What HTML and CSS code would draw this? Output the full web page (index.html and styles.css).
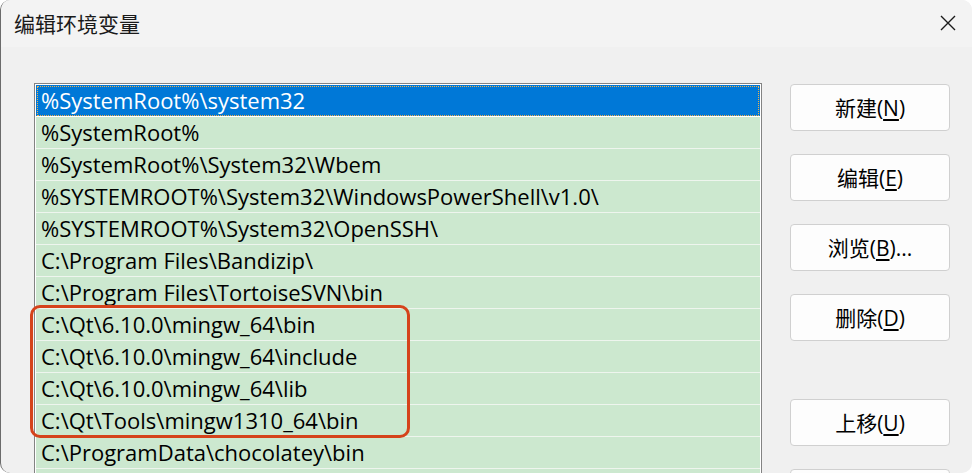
FILE: index.html
```html
<!DOCTYPE html>
<html lang="zh-CN">
<head>
  <meta charset="utf-8">
  <title>编辑环境变量</title>
  <link rel="stylesheet" href="styles.css">
</head>
<body>
  <div class="window">
    <header class="titlebar">
      <h1>编辑环境变量</h1>
      <button class="close" type="button" aria-label="关闭">
        <svg width="16" height="16" viewBox="0 0 16 16" aria-hidden="true">
          <path d="M1 1 L15 15 M15 1 L1 15" stroke="#1a1a1a" stroke-width="1.4" fill="none"/>
        </svg>
      </button>
    </header>

    <div class="content">
      <div class="list-wrap">
        <ul class="path-list">
          <li class="selected">%SystemRoot%\system32</li>
          <li>%SystemRoot%</li>
          <li>%SystemRoot%\System32\Wbem</li>
          <li>%SYSTEMROOT%\System32\WindowsPowerShell\v1.0\</li>
          <li>%SYSTEMROOT%\System32\OpenSSH\</li>
          <li>C:\Program Files\Bandizip\</li>
          <li>C:\Program Files\TortoiseSVN\bin</li>
          <li>C:\Qt\6.10.0\mingw_64\bin</li>
          <li>C:\Qt\6.10.0\mingw_64\include</li>
          <li>C:\Qt\6.10.0\mingw_64\lib</li>
          <li>C:\Qt\Tools\mingw1310_64\bin</li>
          <li>C:\ProgramData\chocolatey\bin</li>
          <li></li>
        </ul>
        <div class="highlight" aria-hidden="true"></div>
      </div>

      <div class="actions">
        <button type="button">新建(<u>N</u>)</button>
        <button type="button">编辑(<u>E</u>)</button>
        <button type="button">浏览(<u>B</u>)...</button>
        <button type="button">删除(<u>D</u>)</button>
        <button type="button" class="spaced">上移(<u>U</u>)</button>
        <button type="button" aria-label="下移"></button>
      </div>
    </div>
  </div>
</body>
</html>
```

FILE: styles.css
```css
* {
  box-sizing: border-box;
}

html,
body {
  margin: 0;
  background: #ffffff;
}

body {
  width: 972px;
  height: 473px;
  overflow: hidden;
  font-family: "Open Sans", "Noto Sans CJK SC", sans-serif;
  font-size: 21px;
  color: #000;
}

.window {
  width: 972px;
  height: 473px;
  overflow: hidden;
  border-radius: 10px;
  border-left: 1px solid #6b6b6b;
  background: #f0f0f0;
}

.titlebar {
  height: 47px;
  display: flex;
  align-items: center;
  justify-content: space-between;
  padding: 0 16px 2px 13px;
  background: #f3f3f3;
}

.titlebar h1 {
  margin: 0;
  font-family: "Noto Sans CJK SC", sans-serif;
  font-size: 21px;
  font-weight: 400;
  color: #1a1a1a;
}

.close {
  width: 16px;
  height: 16px;
  padding: 0;
  border: none;
  background: none;
  display: flex;
}

.content {
  display: flex;
  align-items: flex-start;
  gap: 28px;
  padding: 36px 0 0 33px;
}

.list-wrap {
  position: relative;
  flex: none;
}

.path-list {
  list-style: none;
  margin: 0;
  padding: 1px 1px 0;
  width: 728px;
  height: 420px;
  overflow: hidden;
  border: 1px solid #838383;
  border-bottom: none;
  background: #fff;
  font-size: 22px;
}

.path-list li {
  height: 32px;
  line-height: 31px;
  padding-left: 5px;
  background: #cce8cf;
  border-bottom: 1px solid #eef5ee;
  white-space: nowrap;
}

.path-list li.selected {
  background: #0078d7;
  color: #fff;
  outline: 1px dotted #f0b04a;
  outline-offset: -2px;
  border-bottom-color: #ffffff;
}

/* annotation drawn on top of the list */
.highlight {
  position: absolute;
  left: -4px;
  top: 222px;
  width: 380px;
  height: 133px;
  border: 3px solid #d5431b;
  border-radius: 10px;
}

.actions {
  display: flex;
  flex-direction: column;
  gap: 23px;
  padding-top: 1px;
}

.actions button {
  width: 160px;
  height: 47px;
  padding: 0 0 2px;
  border: 1px solid #d0d0d0;
  border-radius: 4px;
  background: #fdfdfd;
  font-family: "Open Sans", "Noto Sans CJK SC", sans-serif;
  font-size: 21px;
  color: #000;
}

.actions button u {
  text-underline-offset: 3px;
}

.actions .spaced {
  margin-top: 35px;
}
```
